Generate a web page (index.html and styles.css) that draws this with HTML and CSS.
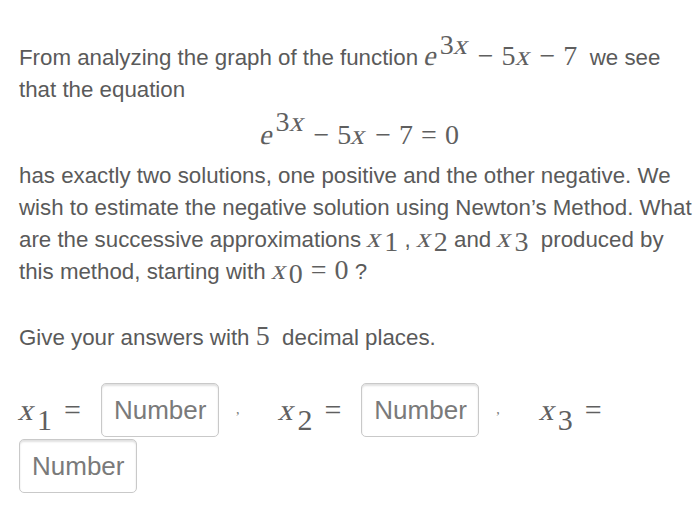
FILE: index.html
```html
<!DOCTYPE html>
<html>
<head>
<meta charset="utf-8">
<link rel="stylesheet" href="styles.css">
</head>
<body>
<main class="q">
  <p class="para">From analyzing the graph of the function <span class="m"><i>e</i><sup class="sup">3<i>x</i></sup><span class="op">−</span>5<i>x</i><span class="op">−</span>7</span>&nbsp; we see<br>that the equation</p>
  <div class="disp"><span class="m"><i>e</i><sup class="sup">3<i>x</i></sup><span class="op">−</span>5<i>x</i><span class="op">−</span>7<span class="op">=</span>0</span></div>
  <p class="para">has exactly two solutions, one positive and the other negative. We<br>wish to estimate the negative solution using Newton’s Method. What<br>are the successive approximations <span class="m"><i>x</i><sub class="sub">1</sub></span> , <span class="m"><i>x</i><sub class="sub">2</sub></span> and <span class="m"><i>x</i><sub class="sub">3</sub></span>&nbsp; produced by<br>this method, starting with <span class="m"><i>x</i><sub class="sub">0</sub><span class="op">=</span>0</span> ?</p>
  <p class="para gap">Give your answers with <span class="m">5</span>&nbsp; decimal places.</p>
  <div class="answers">
    <span class="m big var"><i>x</i><sub class="sub">1</sub><span class="eq">=</span></span>
    <input class="box" type="text" placeholder="Number">
    <span class="sep">,</span>
    <span class="m big var"><i>x</i><sub class="sub">2</sub><span class="eq">=</span></span>
    <input class="box" type="text" placeholder="Number">
    <span class="sep">,</span>
    <span class="m big var"><i>x</i><sub class="sub">3</sub><span class="eq">=</span></span>
    <input class="box" type="text" placeholder="Number">
  </div>
</main>
</body>
</html>
```
FILE: styles.css
```css
html, body {
  margin: 0;
  padding: 0;
  background: #ffffff;
}
.q {
  padding: 42px 0 0 19px;
  font-family: "Liberation Sans", Arial, sans-serif;
  font-size: 22.3px;
  color: #5a5a5a;
}
.para {
  margin: 0;
  line-height: 32.3px;
}
.gap {
  margin-top: 33px;
}
.m {
  font-family: "Liberation Serif", "DejaVu Serif", serif;
  font-size: 28px;
  line-height: 0;
  color: #5f5f5f;
}
.m i {
  display: inline-block;
  font-style: normal;
  transform: skewX(-14deg);
  padding: 0 1px 0 1px;
}
.sup {
  font-size: 28px;
  vertical-align: 11px;
  line-height: 0;
  margin-left: 1px;
}
.sub {
  font-size: 28px;
  vertical-align: -4px;
  line-height: 0;
  margin-left: 1px;
}
.op {
  margin: 0 8px;
}
.disp {
  text-align: center;
  padding: 14px 0 0 0;
  height: 53px;
  line-height: 32px;
  box-sizing: border-box;
}
.disp .sup {
  vertical-align: 13px;
}
.answers {
  display: flex;
  flex-wrap: wrap;
  align-items: center;
  row-gap: 2px;
  margin-top: 29px;
}
.big {
  font-size: 30px;
}
.big .sub {
  font-size: 30px;
  vertical-align: -10px;
}
.var {
  line-height: 54px;
  margin-right: 20px;
}
.eq {
  margin-left: 12px;
}
.box {
  width: 118px;
  height: 54px;
  box-sizing: border-box;
  border: 1px solid #c9c9c9;
  border-radius: 5px;
  box-shadow: inset 0 2px 2px rgba(0, 0, 0, 0.12);
  padding: 0 0 0 12px;
  margin: 0;
  font-family: "Liberation Sans", Arial, sans-serif;
  font-size: 26px;
  color: #555;
  background: #fff;
  outline: none;
}
.box::placeholder {
  color: #7a7a7a;
}
.sep {
  font-family: "Liberation Serif", serif;
  font-size: 14px;
  margin: 0 40px 0 17px;
  color: #777;
}
```
